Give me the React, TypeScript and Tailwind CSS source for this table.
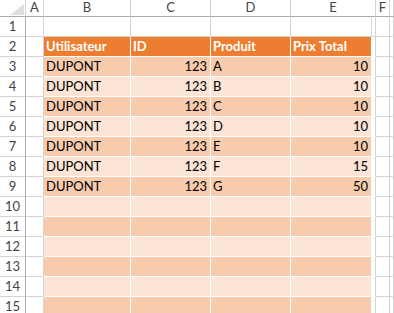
import React from "react";

const data: { p: string; v: string }[] = [
  { p: "A", v: "10" },
  { p: "B", v: "10" },
  { p: "C", v: "10" },
  { p: "D", v: "10" },
  { p: "E", v: "10" },
  { p: "F", v: "15" },
  { p: "G", v: "50" },
];

const font = { fontFamily: "Lato, 'Liberation Sans', sans-serif" };

type Kind = "grid" | "head" | "dark" | "light" | "rowhead" | "gap";

function Cell({
  children,
  kind,
  align = "left",
}: {
  children?: React.ReactNode;
  kind: Kind;
  align?: "left" | "right";
}) {
  const base =
    "h-[20px] border-r border-b flex items-end pb-[2px] text-[13px] leading-[15px] overflow-hidden whitespace-nowrap";
  const k =
    kind === "grid"
      ? "bg-white border-[#d4d4d4]"
      : kind === "gap"
      ? "bg-white border-r-[#d4d4d4] border-b-white"
      : kind === "head"
      ? "bg-[#ed7d31] border-white text-white font-bold"
      : kind === "dark"
      ? "bg-[#f8cbad] border-white text-black"
      : kind === "light"
      ? "bg-[#fce4d6] border-white text-black"
      : "bg-white border-b-[#d4d4d4] border-r-[#ababab] justify-center text-[#444]";
  const a =
    kind === "rowhead" || kind === "gap"
      ? ""
      : align === "right"
      ? "justify-end pr-[3px]"
      : "pl-[2px]";
  return <div className={`${base} ${k} ${a}`}>{children}</div>;
}

function ColHead({ label }: { label: string }) {
  return (
    <div className="h-[17px] bg-white border-r border-b border-r-[#d4d4d4] border-b-[#ababab] flex items-end justify-center pb-[1px] text-[13px] leading-[15px] text-[#444]">
      {label}
    </div>
  );
}

export default function App() {
  const rows: React.ReactNode[] = [];
  for (let r = 1; r <= 16; r++) {
    const cells: React.ReactNode[] = [];
    cells.push(
      <Cell key="rh" kind="rowhead">
        {r}
      </Cell>
    );
    cells.push(<Cell key="a" kind="grid" />);
    if (r === 1) {
      for (let i = 0; i < 4; i++) cells.push(<Cell key={"c" + i} kind="grid" />);
    } else if (r === 2) {
      cells.push(<Cell key="b" kind="head">Utilisateur</Cell>);
      cells.push(<Cell key="c" kind="head">ID</Cell>);
      cells.push(<Cell key="d" kind="head">Produit</Cell>);
      cells.push(<Cell key="e" kind="head">Prix Total</Cell>);
    } else {
      const kind = r % 2 === 1 ? "dark" : "light";
      const d = data[r - 3];
      cells.push(<Cell key="b" kind={kind}>{d ? "DUPONT" : ""}</Cell>);
      cells.push(<Cell key="c" kind={kind} align="right">{d ? "123" : ""}</Cell>);
      cells.push(<Cell key="d" kind={kind}>{d ? d.p : ""}</Cell>);
      cells.push(<Cell key="e" kind={kind} align="right">{d ? d.v : ""}</Cell>);
    }
    cells.push(<Cell key="gap" kind={r === 1 ? "grid" : "gap"} />);
    cells.push(<Cell key="f" kind="grid" />);
    cells.push(<Cell key="g" kind="grid" />);
    rows.push(<React.Fragment key={r}>{cells}</React.Fragment>);
  }

  return (
    <div className="w-[394px] h-[313px] overflow-hidden bg-white" style={font}>
      <div className="grid grid-cols-[26px_18px_87px_80px_80px_81px_4px_14px_1fr]">
        <div className="relative h-[17px] bg-white border-r border-b border-r-[#d4d4d4] border-b-[#ababab]">
          <svg className="absolute left-[10px] top-[4px]" width="14" height="11" viewBox="0 0 14 11">
            <polygon points="14,0 14,11 0,11" fill="#dfdfdf" />
          </svg>
        </div>
        <ColHead label="A" />
        <ColHead label="B" />
        <ColHead label="C" />
        <ColHead label="D" />
        <div className="col-span-2 h-[17px] bg-white border-r border-b border-r-[#d4d4d4] border-b-[#ababab] flex items-end justify-center pb-[1px] text-[13px] leading-[15px] text-[#444]">
          E
        </div>
        <ColHead label="F" />
        <ColHead label="" />
        {rows}
      </div>
    </div>
  );
}
